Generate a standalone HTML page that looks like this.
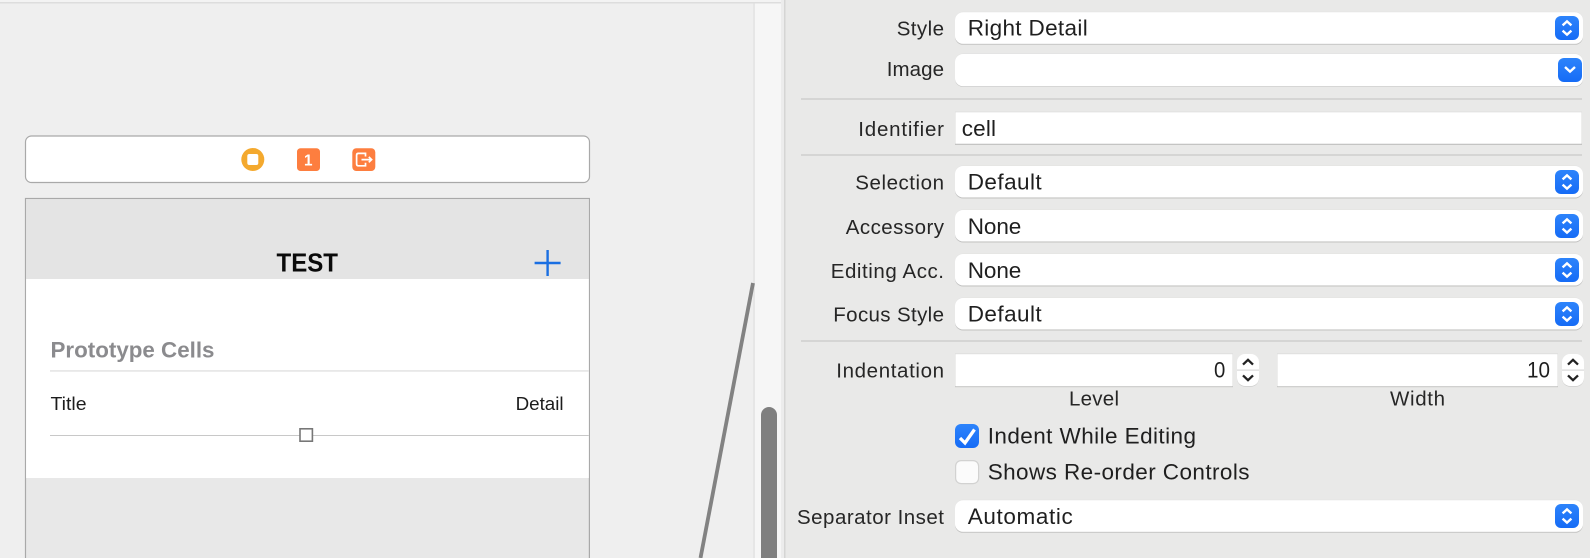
<!DOCTYPE html>
<html><head><meta charset="utf-8"><style>
html,body{margin:0;padding:0;width:1590px;height:558px;overflow:hidden;background:#e9e9e8}
svg{display:block}
text{font-family:"Liberation Sans",sans-serif;fill:#262626;font-size:20.5px}
.p{font-size:22.5px;fill:#1f1f1f}
</style></head><body>
<svg width="1590" height="558" viewBox="0 0 1590 558" xmlns="http://www.w3.org/2000/svg">
<defs>
<linearGradient id="b" x1="0" y1="0" x2="0" y2="1"><stop offset="0" stop-color="#2d84fb"/><stop offset="1" stop-color="#166cf6"/></linearGradient>
<g id="ud"><rect x="-12" y="-12" width="24" height="24" rx="6" fill="url(#b)"/><path d="M-4.4-2.6 0-6.6 4.4-2.6M-4.4 2.6 0 6.6 4.4 2.6" fill="none" stroke="#fff" stroke-width="2.4"/></g>
<g id="pop"><rect x="955" y="0.5" width="628" height="32" rx="8" fill="#c2c2c1"/><rect x="955" y="-0.5" width="628" height="32" rx="8" fill="#e2e2e1"/><rect x="955" y="0" width="628" height="31.4" rx="8" fill="#fff"/></g>
<g id="step"><rect x="0" y="0.6" width="22" height="32" rx="8" fill="#c8c8c7"/><rect x="0" y="0" width="22" height="32" rx="8" fill="#fff"/><rect x="0" y="15.5" width="22" height="1.2" fill="#d8d8d8"/><path d="M6 10.6 11 5.8 16 10.6M6 21.4 11 26.2 16 21.4" fill="none" stroke="#222" stroke-width="2.3"/></g>
</defs>

<!-- canvas -->
<rect width="784" height="558" fill="#efefef"/>
<rect x="0" y="0" width="784" height="2" fill="#f3f3f3"/>
<rect x="0" y="2" width="784" height="1.5" fill="#dddddd"/>
<rect x="753" y="3.5" width="2" height="555" fill="#e6e6e6"/>
<rect x="755" y="3.5" width="26" height="555" fill="#f6f6f6"/>
<rect x="781" y="0" width="3" height="558" fill="#ececec"/>
<rect x="784" y="0" width="1.5" height="558" fill="#d5d5d4"/>
<rect x="761" y="407" width="16" height="151" rx="8" fill="#7f7f7f"/>
<rect x="761" y="420" width="16" height="138" fill="#7f7f7f"/>
<path d="M753 283 700.5 558" stroke="#828282" stroke-width="3.8" fill="none"/>

<!-- scene dock -->
<rect x="25.5" y="136" width="564" height="46.5" rx="6" fill="#fff" stroke="#a9a9a9" stroke-width="1.2"/>
<circle cx="252.8" cy="159.5" r="11.5" fill="#f4a92e"/>
<rect x="247.3" y="154" width="11" height="11" rx="2" fill="#fff"/>
<rect x="297" y="148.2" width="23" height="22.8" rx="3.5" fill="#fd7e3f"/>
<text x="304" y="165.5" style="font-size:16px;font-weight:bold;fill:#fff" textLength="8.5" lengthAdjust="spacingAndGlyphs">1</text>
<rect x="352.3" y="148.2" width="23" height="22.8" rx="4" fill="#fd7e3f"/>
<path d="M365.5 156.5V153.4H358.4Q356.6 153.4 356.6 155.2V164Q356.6 165.8 358.4 165.8H365.5V162.7M361.5 159.6H371.5M368.8 156.9 371.6 159.6 368.8 162.3" fill="none" stroke="#fff" stroke-width="1.7"/>

<!-- view controller -->
<rect x="25.5" y="198.5" width="563.9" height="370" fill="#e8e8e8" stroke="#a9a9a9" stroke-width="1.2"/>
<rect x="26.1" y="199.1" width="562.7" height="79.9" fill="#e4e4e4"/>
<rect x="26.1" y="279" width="562.7" height="199" fill="#fff"/>
<text x="276.5" y="271.7" textLength="61.5" lengthAdjust="spacingAndGlyphs" style="font-size:26px;font-weight:bold;fill:#0a0a0a">TEST</text>
<path d="M534.6 263H560.6M547.6 250V276" stroke="#1a6fe2" stroke-width="2.4" fill="none"/>
<text x="50.5" y="357.5" textLength="164" lengthAdjust="spacingAndGlyphs" style="font-size:22.5px;font-weight:bold;fill:#8b8b8e">Prototype Cells</text>
<rect x="50" y="370.2" width="538.8" height="1.5" fill="#e3e3e3"/>
<text x="50.5" y="410" textLength="36" lengthAdjust="spacingAndGlyphs" style="font-size:18.5px;fill:#1c1c1c">Title</text>
<text x="515.6" y="410" textLength="48" lengthAdjust="spacingAndGlyphs" style="font-size:18.5px;fill:#1c1c1c">Detail</text>
<rect x="50" y="435" width="538.8" height="1" fill="#c8c8c8"/>
<rect x="300" y="428.8" width="12.4" height="12.4" fill="#fff" stroke="#777" stroke-width="1.6"/>

<!-- inspector labels -->
<text x="896.7" y="35.7" textLength="47.3">Style</text>
<text x="886.7" y="76" textLength="57.3">Image</text>
<text x="858.3" y="136" textLength="85.7">Identifier</text>
<text x="855.3" y="189.7" textLength="88.7">Selection</text>
<text x="845.7" y="234" textLength="98.3">Accessory</text>
<text x="830.7" y="278" textLength="113.3">Editing Acc.</text>
<text x="833.3" y="321.7" textLength="110.7">Focus Style</text>
<text x="836.3" y="377.7" textLength="107.7">Indentation</text>
<text x="797" y="524" textLength="147">Separator Inset</text>

<!-- separators -->
<rect x="801" y="98" width="781" height="2" fill="#d5d5d4"/>
<rect x="801" y="154" width="781" height="2" fill="#d5d5d4"/>
<rect x="801" y="340" width="781" height="2" fill="#d5d5d4"/>

<!-- popups -->
<use href="#pop" y="12.3"/><use href="#ud" x="1567" y="28"/>
<text class="p" x="967.7" y="35.7" textLength="120">Right Detail</text>
<rect x="955" y="54.5" width="628" height="32.4" rx="8" fill="#c2c2c1"/><rect x="955" y="53.4" width="628" height="32.4" rx="8" fill="#e2e2e1"/><rect x="955" y="54" width="628" height="32.2" rx="8" fill="#fff"/>
<rect x="1558" y="58" width="24" height="24" rx="6" fill="url(#b)"/>
<path d="M1565 67 1570 71.6 1575 67" fill="none" stroke="#fff" stroke-width="2.4"/>

<rect x="955" y="113" width="627" height="32" fill="#c4c4c3"/>
<rect x="955" y="111.6" width="627" height="32" fill="#dcdcdb"/>
<rect x="955.5" y="112.3" width="626" height="31.4" fill="#fff"/>
<text class="p" x="961.7" y="136" textLength="34.3">cell</text>

<use href="#pop" y="166"/><use href="#ud" x="1567" y="182"/>
<text class="p" x="967.7" y="189.7" textLength="74">Default</text>
<use href="#pop" y="210"/><use href="#ud" x="1567" y="226"/>
<text class="p" x="967.7" y="234" textLength="53.6">None</text>
<use href="#pop" y="254"/><use href="#ud" x="1567" y="270"/>
<text class="p" x="967.7" y="278" textLength="53.6">None</text>
<use href="#pop" y="298"/><use href="#ud" x="1567" y="314"/>
<text class="p" x="967.7" y="321.7" textLength="74">Default</text>

<!-- indentation -->
<rect x="955" y="354.6" width="278" height="32.6" fill="#c4c4c3"/>
<rect x="955" y="353.4" width="278" height="32.6" fill="#dcdcdb"/>
<rect x="955.5" y="354.2" width="277" height="32" fill="#fff"/>
<text class="p" x="1214" y="377.7" textLength="11.3" lengthAdjust="spacingAndGlyphs">0</text>
<use href="#step" x="1237" y="354"/>
<rect x="1277" y="354.6" width="281" height="32.6" fill="#c4c4c3"/>
<rect x="1277" y="353.4" width="281" height="32.6" fill="#dcdcdb"/>
<rect x="1277.5" y="354.2" width="280" height="32" fill="#fff"/>
<text class="p" x="1527" y="377.7" textLength="23" lengthAdjust="spacingAndGlyphs">10</text>
<use href="#step" x="1562" y="354"/>
<text x="1069" y="405.7" textLength="50">Level</text>
<text x="1390" y="405.7" textLength="55">Width</text>

<!-- checkboxes -->
<rect x="955" y="424" width="24" height="24" rx="6" fill="url(#b)"/>
<path d="M960 438 965 443 974.5 429.5" fill="none" stroke="#fff" stroke-width="3.3"/>
<text class="p" x="987.7" y="443.3" textLength="208.3">Indent While Editing</text>
<rect x="955.6" y="460.6" width="23" height="23" rx="5.5" fill="#fbfbfb" stroke="#d2d2d1" stroke-width="1.2"/>
<text class="p" x="987.7" y="479.3" textLength="261.8">Shows Re-order Controls</text>

<use href="#pop" y="500.3"/><use href="#ud" x="1567" y="516"/>
<text class="p" x="967.7" y="524" textLength="105">Automatic</text>
</svg>
</body></html>
